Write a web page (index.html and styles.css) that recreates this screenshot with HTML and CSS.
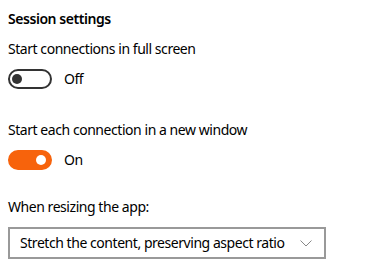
FILE: index.html
```html
<!DOCTYPE html>
<html lang="en">
<head>
    <meta charset="UTF-8">
    <title>Session settings</title>
    <link rel="stylesheet" href="styles.css">
</head>
<body>

    <h3 class="section-title">Session settings</h3>

    <!-- full screen -->
    <div class="setting">
        <div class="setting-label">Start connections in full screen</div>
        <div class="toggle-row">
            <span class="toggle"><span class="thumb"></span></span>
            <span class="toggle-text">Off</span>
        </div>
    </div>

    <!-- new window -->
    <div class="setting setting-gap">
        <div class="setting-label">Start each connection in a new window</div>
        <div class="toggle-row">
            <span class="toggle toggle-on"><span class="thumb"></span></span>
            <span class="toggle-text">On</span>
        </div>
    </div>

    <!-- resize mode -->
    <div class="setting setting-gap-lg">
        <div class="setting-label">When resizing the app:</div>
        <div class="dropdown">
            <span class="dropdown-text">Stretch the content, preserving aspect ratio</span>
            <svg class="chevron" width="12" height="7" viewBox="0 0 12 7">
                <path d="M0.5 0.5 L6 6 L11.5 0.5" fill="none" stroke="#888" stroke-width="1"/>
            </svg>
        </div>
    </div>

</body>
</html>
```

FILE: styles.css
```css
body {
    font-family: "Noto Sans", "Open Sans", sans-serif;
    font-size: 14px;
    line-height: 20px;
    letter-spacing: -0.45px;
    color: #000;
    background-color: #fff;
    margin: 0;
    padding: 9px 8px 0 8px;
}

.section-title {
    font-size: 14px;
    font-weight: 600;
    margin: 0 0 10px 0;
}

.setting-label {
    margin-bottom: 10px;
}

.setting-gap {
    margin-top: 31px;
}

.setting-gap-lg {
    margin-top: 27px;
}

.toggle-row {
    display: flex;
    align-items: center;
    height: 20px;
}

.toggle {
    box-sizing: border-box;
    width: 44px;
    height: 20px;
    border: 2px solid #333;
    border-radius: 10px;
    display: flex;
    align-items: center;
    padding-left: 2px;
}

.thumb {
    width: 10px;
    height: 10px;
    border-radius: 50%;
    background-color: #333;
}

.toggle-on {
    background-color: #f7630c;
    border-color: #f7630c;
    justify-content: flex-end;
    padding-left: 0;
    padding-right: 4px;
}

.toggle-on .thumb {
    background-color: #fff;
}

.toggle-text {
    margin-left: 12px;
}

.dropdown {
    box-sizing: border-box;
    width: 318px;
    height: 32px;
    border: 2px solid #999;
    display: flex;
    align-items: center;
    justify-content: space-between;
    padding: 0 12px 0 10px;
}

.dropdown-text {
    white-space: nowrap;
}
```
